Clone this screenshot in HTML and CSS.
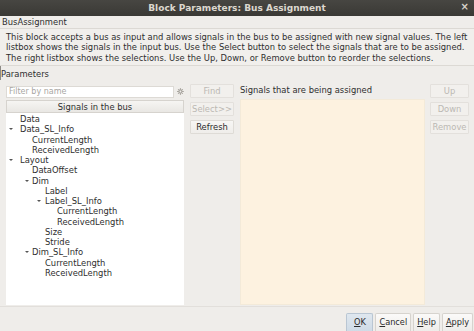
FILE: index.html
```html
<!DOCTYPE html>
<html>
<head>
<meta charset="utf-8">
<link rel="stylesheet" href="styles.css">
</head>
<body>
<div class="window">
  <div class="titlebar">
    <span class="title">Block Parameters: Bus Assignment</span>
    <span class="close">×</span>
  </div>
  <div class="blockname">BusAssignment</div>
  <div class="desc">This block accepts a bus as input and allows signals in the bus to be assigned with new signal values. The left listbox shows the signals in the input bus. Use the Select button to select the signals that are to be assigned. The right listbox shows the selections. Use the Up, Down, or Remove button to reorder the selections.</div>
  <div class="params-label">Parameters</div>
  <div class="content">
    <div class="left">
      <div class="filter-row">
        <div class="filter">Filter by name</div>
        <svg class="gear" width="7" height="7" viewBox="0 0 7 7"><circle cx="3.5" cy="3.5" r="2.2" fill="#a9a6a0"/><g stroke="#a9a6a0" stroke-width="1"><line x1="3.5" y1="0" x2="3.5" y2="7"/><line x1="0" y1="3.5" x2="7" y2="3.5"/><line x1="1" y1="1" x2="6" y2="6"/><line x1="6" y1="1" x2="1" y2="6"/></g><circle cx="3.5" cy="3.5" r="0.9" fill="#f0eeeb"/></svg>
      </div>
      <div class="tree">
        <div class="tree-head">Signals in the bus</div>
        <div class="tree-body">
          <div class="item l1">Data</div>
          <div class="item l1 open">Data_SL_Info</div>
          <div class="item l2">CurrentLength</div>
          <div class="item l2">ReceivedLength</div>
          <div class="item l1 open">Layout</div>
          <div class="item l2">DataOffset</div>
          <div class="item l2 open">Dim</div>
          <div class="item l3">Label</div>
          <div class="item l3 open">Label_SL_Info</div>
          <div class="item l4">CurrentLength</div>
          <div class="item l4">ReceivedLength</div>
          <div class="item l3">Size</div>
          <div class="item l3">Stride</div>
          <div class="item l2 open">Dim_SL_Info</div>
          <div class="item l3">CurrentLength</div>
          <div class="item l3">ReceivedLength</div>
        </div>
      </div>
    </div>
    <div class="btn-col mid">
      <div class="btn disabled">Find</div>
      <div class="btn disabled">Select&gt;&gt;</div>
      <div class="btn">Refresh</div>
    </div>
    <div class="right">
      <div class="right-label">Signals that are being assigned</div>
      <div class="assigned"></div>
    </div>
    <div class="btn-col side">
      <div class="btn disabled">Up</div>
      <div class="btn disabled">Down</div>
      <div class="btn disabled">Remove</div>
    </div>
  </div>
  <div class="footer">
    <div class="fbtn default"><u>O</u>K</div>
    <div class="fbtn"><u>C</u>ancel</div>
    <div class="fbtn"><u>H</u>elp</div>
    <div class="fbtn"><u>A</u>pply</div>
  </div>
</div>
</body>
</html>
```

FILE: styles.css
```css
html, body {
  margin: 0;
  padding: 0;
  background: #efedea;
}
.window {
  width: 474px;
  height: 331px;
  overflow: hidden;
  font-family: "DejaVu Sans", sans-serif;
  font-size: 8.4px;
  color: #2e2e2e;
  background: #efedea;
  display: flex;
  flex-direction: column;
}
.titlebar {
  height: 16px;
  flex: none;
  background: linear-gradient(#474642, #3a3935);
  color: #dcd8cf;
  font-weight: bold;
  font-size: 9px;
  display: flex;
  align-items: center;
  justify-content: center;
  position: relative;
}
.close {
  position: absolute;
  right: 5px;
  top: 1px;
  font-size: 10px;
  color: #d8d4cc;
}
.blockname {
  height: 12px;
  line-height: 12px;
  padding-left: 2px;
  flex: none;
}
.desc {
  flex: none;
  border-top: 1px solid #dcd9d4;
  border-bottom: 1px solid #dcd9d4;
  padding: 3px 4px 2px 6px;
  line-height: 10.4px;
  height: 31px;
  background: #f1efec;
}
.params-label {
  flex: none;
  height: 14px;
  line-height: 16px;
  border-left: 1px solid #8d8a85;
}
.content {
  flex: none;
  height: 226px;
  display: flex;
  padding-top: 4px;
  box-sizing: border-box;
}
.left {
  margin-left: 6px;
  width: 178px;
  display: flex;
  flex-direction: column;
}
.filter-row {
  display: flex;
  align-items: center;
  height: 11px;
  margin-top: 2px;
}
.filter {
  width: 168px;
  height: 10px;
  line-height: 10px;
  border: 1px solid #dddad5;
  background: #ffffff;
  color: #a8a6a2;
  padding-left: 2px;
  font-size: 8px;
}
.gear {
  margin-left: 3px;
}
.tree {
  margin-top: 3px;
  display: flex;
  flex-direction: column;
  width: 178px;
  height: 205px;
}
.tree-head {
  line-height: 12px;
  text-align: center;
  background: linear-gradient(#f6f5f3, #e9e7e3);
  border: 1px solid #d6d3ce;
  box-sizing: border-box;
  height: 13px;
}
.tree-body {
  flex: 1;
  background: #ffffff;
  padding-top: 1px;
}
.item {
  height: 10.27px;
  line-height: 10.27px;
  position: relative;
  white-space: nowrap;
}
.l1 { padding-left: 14px; }
.l2 { padding-left: 26px; }
.l3 { padding-left: 39px; }
.l4 { padding-left: 51px; }
.open::before {
  content: "";
  position: absolute;
  top: 4px;
  border-left: 2px solid transparent;
  border-right: 2px solid transparent;
  border-top: 2px solid #555;
}
.l1.open::before { left: 3px; }
.l2.open::before { left: 19px; }
.l3.open::before { left: 31px; }
.btn-col {
  display: flex;
  flex-direction: column;
  gap: 4px;
}
.btn-col.mid {
  margin-left: 6px;
  width: 44px;
}
.btn-col.side {
  margin-left: 5px;
  width: 39px;
}
.btn {
  height: 14px;
  line-height: 13px;
  text-align: center;
  border: 1px solid #dedbd6;
  background: linear-gradient(#f7f6f4, #efedea);
  box-sizing: border-box;
  border-radius: 1px;
  color: #2a2a2a;
}
.btn.disabled {
  color: #bbb8b3;
  background: #f2f0ed;
  border-color: #e3e0dc;
}
.right {
  margin-left: 6px;
  width: 185px;
  display: flex;
  flex-direction: column;
}
.right-label {
  height: 15px;
  line-height: 12px;
}
.assigned {
  height: 206px;
  background: #fdf2e0;
  border: 1px solid #f3ead9;
  box-sizing: border-box;
}
.footer {
  flex: 1;
  border-top: 1px solid #e2dfdb;
  display: flex;
  justify-content: flex-end;
  align-items: flex-end;
  gap: 2px;
  padding-right: 1px;
}
.fbtn {
  height: 18px;
  line-height: 17px;
  padding: 0 3px;
  border: 1px solid #d6d3ce;
  border-bottom: none;
  background: linear-gradient(#fbfaf9, #eeece9);
  box-sizing: border-box;
  color: #2a2a2a;
  border-radius: 2px 2px 0 0;
  font-size: 8.2px;
  text-align: center;
}
.fbtn.default {
  background: linear-gradient(#dfe7ef, #cfdbe6);
  border-color: #b9c6d3;
  width: 27px;
  padding: 0;
}
.fbtn u {
  text-decoration: underline;
}
```
